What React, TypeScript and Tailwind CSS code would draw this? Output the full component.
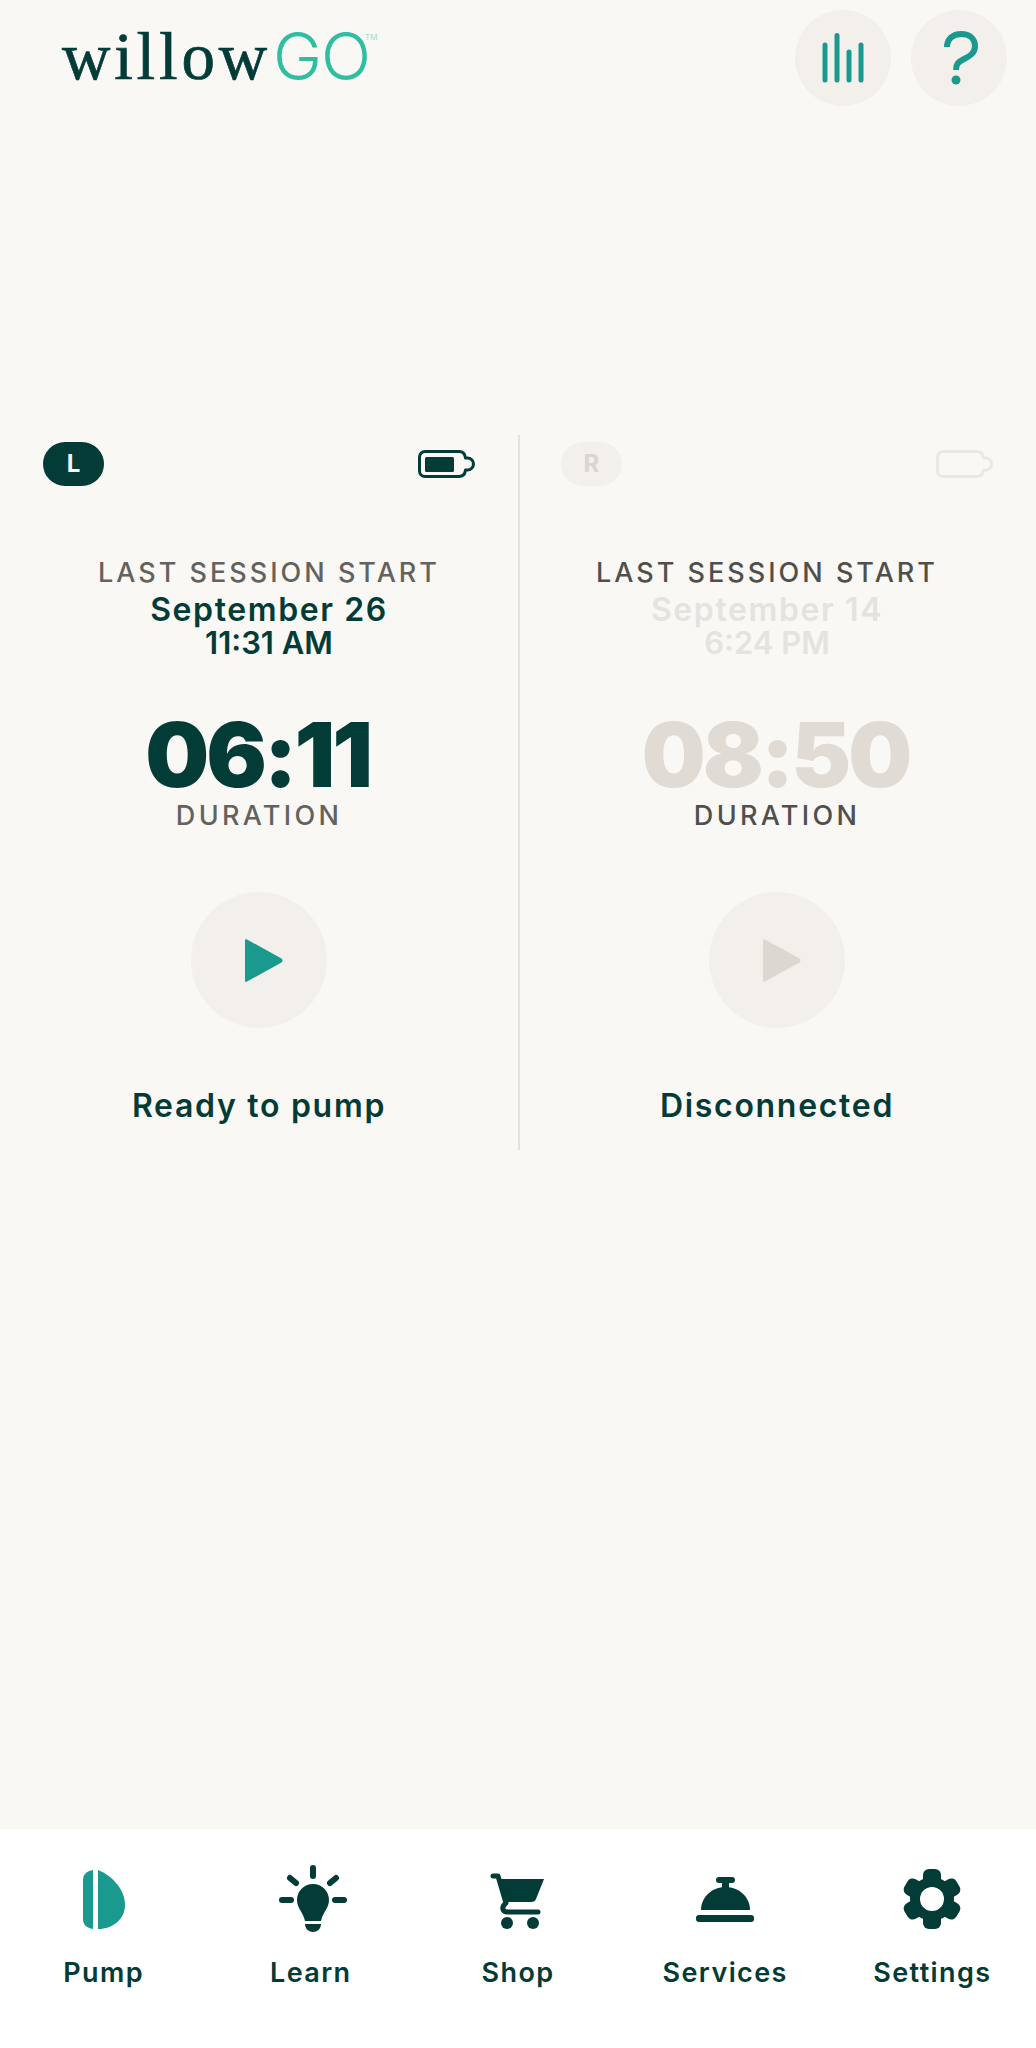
import React from "react";

const DARK = "#033b36";

function Battery({ on }: { on: boolean }) {
  const c = on ? DARK : "#ece7e3";
  return (
    <svg width="57" height="28" viewBox="0 0 57 28" fill="none">
      <path
        d="M7 1.500H41C45 1.500 47 3.500 47.500 8H49.500a6 6 0 0 1 0 12H47.500C47 24.500 45 26.500 41 26.500H7a5.500 5.500 0 0 1-5.500-5.500V7a5.500 5.500 0 0 1 5.500-5.500Z"
        stroke={c}
        strokeWidth="3"
        strokeLinejoin="round"
      />
      {on && <rect x="7" y="7" width="29" height="15" rx="1.5" fill={c} />}
    </svg>
  );
}

function Play({ color }: { color: string }) {
  return (
    <svg width="39" height="45" viewBox="0 0 39 45">
      <path d="M1 3 Q1 0 3 1.5 L37.5 20.5 Q39.5 22.5 37.5 24.5 L3 43.5 Q1 45 1 42 Z" fill={color} />
    </svg>
  );
}

function Side({
  letter,
  active,
  date,
  time,
  duration,
  status,
  shift,
  width,
}: {
  letter: string;
  active: boolean;
  date: string;
  time: string;
  duration: string;
  status: string;
  shift: string;
  width: string;
}) {
  return (
    <div className={`${width} flex flex-col pt-[7px] pb-[26px]`}>
      <div className="flex items-center justify-between pl-[43px] pr-[43px]">
        <div
          className={`w-[61px] h-[44px] rounded-full flex items-center justify-center text-[24px] font-bold ${
            active ? "bg-[#033b36] text-[#faf8f5]" : "bg-[#f3efeb] text-[#d9d5d0]"
          }`}
        >
          {letter}
        </div>
        <Battery on={active} />
      </div>
      <div className={`mt-[70px] flex flex-col items-center ${shift}`}>
        <div className={`text-[27px] leading-[34px] tracking-[3px] font-medium ${active ? "text-[#62625e]" : "text-[#4f4f4b]"}`}>
          LAST SESSION START
        </div>
        <div className={`mt-[3px] leading-[33px] font-semibold text-center ${active ? "text-[#033b36]" : "text-[#e6e2de]"}`}>
          <div className="text-[32px] tracking-[1.6px]">{date}</div>
          <div className="text-[31px]">{time}</div>
        </div>
      </div>
      <div className={`mt-[52px] pr-[3px] text-center text-[90px] leading-[88px] font-black tracking-[-3px] ${active ? "text-[#033b36]" : "text-[#e0dbd4]"}`}>
        {duration}
      </div>
      <div className={`text-center text-[27px] leading-[34px] tracking-[3.3px] font-medium ${active ? "text-[#62625e]" : "text-[#4f4f4b]"}`}>
        DURATION
      </div>
      <div className="mt-[59px] mx-auto w-[136px] h-[136px] rounded-full bg-[#f3efeb] flex items-center justify-center pl-[9px]">
        <Play color={active ? "#1a9a8e" : "#dcd7d1"} />
      </div>
      <div className="mt-[60px] text-center text-[32px] leading-[36px] font-semibold tracking-[1.7px] text-[#033b36]">{status}</div>
    </div>
  );
}

function NavItem({ label, children }: { label: string; children: React.ReactNode }) {
  return (
    <div className="flex flex-col items-center">
      <div className="h-[68px] flex items-center justify-center">{children}</div>
      <div className="mt-[23px] text-[27px] leading-[34px] font-semibold tracking-[1.4px] text-[#033b36]">{label}</div>
    </div>
  );
}

export default function App() {
  return (
    <div className="w-[1036px] h-[2048px] flex flex-col bg-[#faf8f5] font-['Inter','Liberation_Sans',sans-serif]">
      <header className="h-[435px] flex items-start justify-between pl-[62px] pr-[29px] pt-[10px]">
        <div className="flex items-start mt-[8px]">
          <span className="font-['Liberation_Serif',serif] text-[67px] leading-[76px] tracking-[3.8px] text-[#033b36] [-webkit-text-stroke:0.7px_#033b36]">willow</span>
          <span className="ml-[2px] text-[66px] leading-[76px] font-light tracking-[-1px] text-[#2fbf9f]">GO</span>
          <span className="-ml-[5px] text-[8px] leading-[8px] mt-[15px] text-[#9fdccb]">TM</span>
        </div>
        <div className="flex gap-[20px]">
          <div className="w-[96px] h-[96px] rounded-full bg-[#f3efeb] flex items-center justify-center">
            <svg width="46" height="50" viewBox="0 0 46 50" stroke="#1a9a8e" strokeWidth="5" strokeLinecap="round">
              <path d="M5 12V47M17 2.500V47M29 19V47M41 12V47" />
            </svg>
          </div>
          <div className="w-[96px] h-[96px] rounded-full bg-[#f3efeb] flex items-center justify-center pl-[4px]">
            <svg width="34" height="54" viewBox="0 0 34 54" fill="none">
              <path d="M3 16C3 8 9 3 17 3C26 3 31 8 31 15C31 22 26 25 20 28C14 31 12 33 12 39" stroke="#1a9a8e" strokeWidth="6" />
              <circle cx="12" cy="49" r="4.500" fill="#1a9a8e" />
            </svg>
          </div>
        </div>
      </header>

      <main className="flex flex-1 items-start">
        <div className="flex border-r-2 border-[#e9e0da] w-[520px]">
          <Side letter="L" active date="September 26" time="11:31 AM" duration="06:11" status="Ready to pump" shift="ml-[20px]" width="w-[518px]" />
        </div>
        <Side letter="R" active={false} date="September 14" time="6:24 PM" duration="08:50" status="Disconnected" shift="mr-[20px]" width="w-[518px] -ml-[2px]" />
      </main>

      <nav className="h-[219px] bg-white grid grid-cols-5 pt-[36px]">
        <NavItem label="Pump">
          <svg width="42" height="59" viewBox="0 0 42 59" fill="#1a9a8e">
            <path d="M10 0C4 1 0 4 0 10V49C0 55 4 58 10 59Z" />
            <path d="M15 0C30 6 42 20 42 35C42 49 30 59 15 59Z" />
          </svg>
        </NavItem>
        <NavItem label="Learn">
          <svg width="68" height="68" viewBox="0 0 68 68" fill="none" className="ml-[4px]">
            <path d="M34 3V11M11 13L17 18M57 13L51 18M3 35H12M56 35H65" stroke={DARK} strokeWidth="6" strokeLinecap="round" />
            <path d="M34 19C43 19 50 26 50 35C50 43 44 47 42 56H26C24 47 18 43 18 35C18 26 25 19 34 19Z" fill={DARK} />
            <path d="M26 59H42C42 64 38 67 34 67C30 67 26 64 26 59Z" fill={DARK} />
          </svg>
        </NavItem>
        <NavItem label="Shop">
          <svg width="58" height="57" viewBox="10 13 58 57" fill="none" className="mt-[5px]">
            <path d="M14 16H19L27 43C22 47 23 52 29 52H59" stroke={DARK} strokeWidth="5" strokeLinecap="round" strokeLinejoin="round" />
            <path d="M21 19H65L57 39Q56 42 52 42H28Z" fill={DARK} />
            <circle cx="28" cy="63" r="6" fill={DARK} />
            <circle cx="54" cy="63" r="6" fill={DARK} />
          </svg>
        </NavItem>
        <NavItem label="Services">
          <svg width="58" height="46" viewBox="0 0 58 46" fill={DARK}>
            <rect x="20" y="1" width="19" height="6" rx="3" />
            <rect x="26" y="4" width="7" height="10" />
            <path d="M5 34C5 21 16 11 29.500 11C43 11 54 21 54 34Z" />
            <rect x="0" y="39" width="58" height="7" rx="3" />
          </svg>
        </NavItem>
        <NavItem label="Settings">
          <svg width="58" height="60" viewBox="-29 -30 58 60">
            <circle r="22" fill={DARK} />
            <g fill={DARK}>
              <rect x="-9" y="-30" width="18" height="60" rx="6" />
              <rect x="-9" y="-30" width="18" height="60" rx="6" transform="rotate(60)" />
              <rect x="-9" y="-30" width="18" height="60" rx="6" transform="rotate(120)" />
            </g>
            <circle r="12" fill="#fff" />
          </svg>
        </NavItem>
      </nav>
    </div>
  );
}
